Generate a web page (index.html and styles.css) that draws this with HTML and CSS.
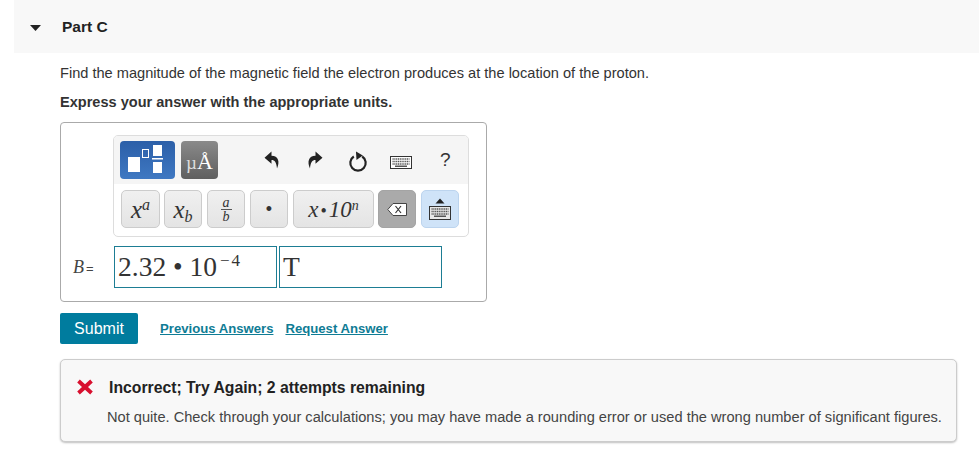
FILE: index.html
```html
<!DOCTYPE html>
<html lang="en">
<head>
<meta charset="utf-8">
<title>Part C</title>
<link rel="stylesheet" href="styles.css">
</head>
<body>
<header class="part-header">
  <svg class="caret" width="11" height="6" viewBox="0 0 11 6"><path d="M0 0H11L5.500 6Z" fill="#222"/></svg>
  <h2 class="part-title">Part C</h2>
</header>
<main class="content">
  <p class="question">Find the magnitude of the magnetic field the electron produces at the location of the proton.</p>
  <p class="instruction">Express your answer with the appropriate units.</p>
  <section class="answer-box">
    <div class="toolbar">
      <div class="toolbar-top">
        <div class="mode mode-template">
          <svg width="55" height="38" viewBox="0 0 55 38">
            <rect x="8" y="16" width="12" height="15" fill="#fff"/>
            <rect x="22.500" y="8.500" width="6" height="8" fill="none" stroke="#fff" stroke-width="1"/>
            <rect x="33" y="4" width="9" height="11" fill="#fff"/>
            <rect x="32" y="17" width="11" height="1.500" fill="#fff"/>
            <rect x="33" y="21" width="9" height="11" fill="#fff"/>
          </svg>
        </div>
        <div class="mode mode-symbols"><span class="mu">µ</span>Å</div>
        <div class="tools">
          <svg class="tool undo" width="16" height="18" viewBox="0 0 16 18"><path d="M7.500.5 .5 6.800 7.500 12.800V9C10.800 9 12.500 11.500 13 17.500 16 11 14.500 4.800 7.500 4.800Z" fill="#222"/></svg>
          <svg class="tool redo" width="16" height="18" viewBox="0 0 16 18"><path d="M8.500.5 15.500 6.800 8.500 12.800V9C5.200 9 3.500 11.500 3 17.500 0 11 1.500 4.800 8.500 4.800Z" fill="#222"/></svg>
          <svg class="tool reset" width="20" height="21" viewBox="0 0 20 21"><path d="M5.800 5.500A7.700 7.700 0 1 0 14.200 5.500" fill="none" stroke="#222" stroke-width="2.200"/><path d="M8 .5 14.800 4.500 8.500 9Z" fill="#222"/></svg>
          <svg class="tool keys" width="22" height="13" viewBox="0 0 22 13"><rect x=".5" y=".5" width="21" height="12" fill="#fff" stroke="#333"/><path d="M2.500 3H19.500M2.500 5.500H19.500M2.500 8H19.500" stroke="#555" stroke-width="1.300" stroke-dasharray="1.200 .6"/><rect x="5" y="9.500" width="12" height="1.500" fill="#555"/></svg>
          <span class="tool help">?</span>
        </div>
      </div>
      <div class="toolbar-bottom">
        <button class="key key-first" type="button"><span class="expr"><i>x</i><sup><i>a</i></sup></span></button>
        <button class="key" type="button"><span class="expr"><i>x</i><sub><i>b</i></sub></span></button>
        <button class="key frac" type="button"><i class="num">a</i><i>b</i></button>
        <button class="key dot" type="button">•</button>
        <button class="key key-wide" type="button"><span class="expr"><i>x</i><span class="sep">•</span><i>10</i><sup><i>n</i></sup></span></button>
        <button class="key key-back" type="button">
          <svg width="20" height="13" viewBox="0 0 20 13"><path d="M6 .5H19.500V12.500H6L.8 6.500Z" fill="#fff" stroke="#444"/><path d="M8.500 3 14 10M14 3 8.500 10" stroke="#333" stroke-width="1.200"/></svg>
        </button>
        <button class="key key-kbd" type="button">
          <svg width="22" height="22" viewBox="0 0 22 22"><path d="M6.500 5.500 11 .5 15.500 5.500Z" fill="#222"/><rect x=".5" y="8.500" width="21" height="13" fill="#e8e8e8" stroke="#333"/><path d="M2.500 11H19.500M2.500 13.500H19.500M2.500 16H19.500" stroke="#555" stroke-width="1.300" stroke-dasharray="1.200 .6"/><rect x="5" y="17.500" width="12" height="1.500" fill="#555"/></svg>
        </button>
      </div>
    </div>
    <div class="answer-row">
      <span class="var"><i>B</i><span class="eq">=</span></span>
      <div class="field">2.32 • 10<span class="exp">−4</span></div>
      <div class="field field-units">T</div>
    </div>
  </section>
  <div class="actions">
    <button class="submit" type="button">Submit</button>
    <a class="link first" href="#">Previous Answers</a>
    <a class="link" href="#">Request Answer</a>
  </div>
  <section class="feedback">
    <div class="feedback-title">
      <svg width="16" height="16" viewBox="0 0 16 16"><path d="M2.800.5 8 5.200 13.200.5 15.800 3.500 11 8 15.800 12.500 13.200 15.500 8 10.800 2.800 15.500.2 12.500 5 8 .2 3.500Z" fill="#d8102f"/></svg>
      <strong>Incorrect; Try Again; 2 attempts remaining</strong>
    </div>
    <p class="feedback-body">Not quite. Check through your calculations; you may have made a rounding error or used the wrong number of significant figures.</p>
  </section>
</main>
</body>
</html>
```
FILE: styles.css
```css
* { box-sizing: border-box; }
html, body { margin: 0; padding: 0; }
body {
  width: 979px;
  height: 457px;
  overflow: hidden;
  background: #fff;
  color: #333;
  font-family: "Liberation Sans", Arial, sans-serif;
  font-size: 14px;
}
.part-header {
  margin-left: 14px;
  height: 53px;
  background: #f8f8f8;
  display: flex;
  align-items: center;
  padding-left: 16px;
}
.caret { flex: none; margin-top: 2px; }
.part-title {
  margin: 0 0 0 21px;
  font-size: 15.500px;
  font-weight: bold;
  color: #222;
}
.content { padding: 0 22px 0 60px; }
.question { margin: 12px 0 0; line-height: 16px; height: 16px; font-size: 14.600px; white-space: nowrap; }
.instruction { margin: 13px 0 0; line-height: 16px; height: 16px; font-weight: bold; font-size: 14.560px; }
.answer-box {
  margin-top: 12px;
  width: 427px;
  height: 180px;
  border: 1px solid #aaa;
  border-radius: 4px;
  padding: 12px 0 0 52px;
}
.toolbar {
  width: 356px;
  height: 102px;
  border: 1px solid #ddd;
  border-radius: 5px;
  overflow: hidden;
}
.toolbar-top {
  height: 48px;
  background: #f5f5f5;
  display: flex;
  padding: 5px 0 0 6px;
  gap: 6px;
}
.mode {
  height: 38px;
  border-radius: 4px;
  flex: none;
}
.mode-template {
  width: 55px;
  background: linear-gradient(#2c5fa8, #3f78c2);
}
.mode-template svg { display: block; }
.mode-symbols {
  width: 37px;
  background: linear-gradient(#8a8a8a, #5f5f5f);
  color: #fff;
  font-family: "Liberation Serif", serif;
  font-size: 22px;
  text-align: center;
  line-height: 42px;
}
.mu { font-size: 19px; color: #ddd; }
.tools { flex: 1; display: flex; align-items: center; padding-left: 40px; height: 38px; }
.tool { flex: none; }
.undo { margin-right: 27px; }
.redo { margin-right: 25px; }
.reset { margin-right: 22px; margin-top: 2px; }
.keys { margin-right: 28px; margin-top: 4px; }
.help { font-size: 19px; color: #333; line-height: 24px; }
.toolbar-bottom {
  display: flex;
  align-items: flex-start;
  padding: 6px 0 0 7px;
  gap: 5px;
}
.key {
  width: 38px;
  height: 38px;
  padding: 0;
  border: 1px solid #ccc;
  border-radius: 5px;
  background: linear-gradient(#f0f0f0, #e4e4e4);
  color: #333;
  font-family: "Liberation Serif", serif;
  font-size: 25px;
  flex: none;
  display: flex;
  align-items: center;
  justify-content: center;
}
.key-first { width: 39px; margin-right: -1px; }
.expr { line-height: 1; }
.expr sup, .expr sub { font-size: 16px; line-height: 0; }
.expr sup { vertical-align: 8px; }
.expr sub { vertical-align: -4px; }
.frac {
  flex-direction: column;
  font-size: 14px;
  line-height: 13px;
}
.num { border-bottom: 1px solid #555; padding: 0 2px; }
.dot { font-size: 18px; font-family: "Liberation Sans", sans-serif; }
.key-wide { width: 81px; font-size: 23px; margin-right: -1px; }
.key-wide .sep { font-size: 18px; margin: 0 2px; }
.key-wide .expr sup { font-size: 14px; vertical-align: 7px; }
.key-back { background: #aaa; border-color: #a4a4a4; }
.key-kbd { background: #cfe3f8; border-color: #bcd4ee; }
.answer-row {
  display: flex;
  align-items: center;
  margin: 9px 0 0 -52px;
  height: 42px;
}
.var {
  width: 53px;
  padding-left: 12px;
  font-family: "Liberation Serif", serif;
  font-size: 18px;
  color: #444;
}
.eq { font-family: "Liberation Sans", sans-serif; font-size: 13px; margin-left: 2px; }
.field {
  width: 163px;
  height: 42px;
  margin-right: 2px;
  border: 1px solid #1d7d94;
  padding-left: 3px;
  font-family: "Liberation Serif", serif;
  font-size: 27.500px;
  line-height: 40px;
  color: #333;
  white-space: nowrap;
}
.exp { font-size: 17px; line-height: 0; margin-left: 3px; letter-spacing: 2px; vertical-align: 10px; }
.actions {
  display: flex;
  align-items: center;
  margin-top: 11px;
  height: 31px;
}
.submit {
  width: 78px;
  height: 31px;
  padding: 0;
  border: 0;
  border-radius: 2px;
  background: #007c9e;
  color: #fff;
  font-family: "Liberation Sans", Arial, sans-serif;
  font-size: 16px;
}
.link {
  font-size: 13.150px;
  font-weight: bold;
  color: #0f7c95;
  text-decoration: underline;
  margin-left: 12px;
}
.link.first { margin-left: 22px; }
.feedback {
  margin-top: 15px;
  width: 897px;
  height: 83px;
  border: 1px solid #ccc;
  border-radius: 5px;
  background: #f8f8f8;
  box-shadow: 0 1px 2px rgba(0,0,0,.25);
  padding: 19px 0 0 16px;
}
.feedback-title { display: flex; align-items: center; height: 16px; }
.feedback-title strong { margin-left: 16px; font-size: 15.750px; color: #222; line-height: 18px; position: relative; top: 1px; }
.feedback-body { margin: 14px 0 0 30px; font-size: 14.630px; line-height: 17px; color: #444; white-space: nowrap; }
```
